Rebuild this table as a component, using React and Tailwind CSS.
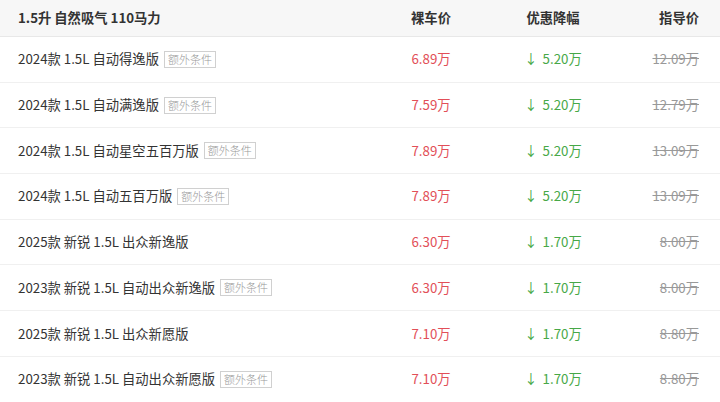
const ROWS = [
  { name: "2024款 1.5L 自动得逸版", extra: true, price: "6.89万", cut: "5.20万", guide: "12.09万" },
  { name: "2024款 1.5L 自动满逸版", extra: true, price: "7.59万", cut: "5.20万", guide: "12.79万" },
  { name: "2024款 1.5L 自动星空五百万版", extra: true, price: "7.89万", cut: "5.20万", guide: "13.09万" },
  { name: "2024款 1.5L 自动五百万版", extra: true, price: "7.89万", cut: "5.20万", guide: "13.09万" },
  { name: "2025款 新锐 1.5L 出众新逸版", extra: false, price: "6.30万", cut: "1.70万", guide: "8.00万" },
  { name: "2023款 新锐 1.5L 自动出众新逸版", extra: true, price: "6.30万", cut: "1.70万", guide: "8.00万" },
  { name: "2025款 新锐 1.5L 出众新愿版", extra: false, price: "7.10万", cut: "1.70万", guide: "8.80万" },
  { name: "2023款 新锐 1.5L 自动出众新愿版", extra: true, price: "7.10万", cut: "1.70万", guide: "8.80万" },
];

const FONT = { fontFamily: '"Noto Sans CJK SC", "Noto Sans", sans-serif' };

export default function App() {
  return (
    <div className="w-[720px] h-[402px] overflow-hidden bg-white text-[13.3px] text-[#333]" style={FONT}>
      <div className="flex h-[37px] items-center border-b border-[#e8e8e8] bg-[#f7f7f7] font-bold">
        <div className="flex-1 pl-[18px]">1.5升 自然吸气 110马力</div>
        <div className="w-[122px] text-center">裸车价</div>
        <div className="w-[122px] text-center">优惠降幅</div>
        <div className="w-[106px] pr-[21px] text-right">指导价</div>
      </div>

      {ROWS.map((row, i) => (
        <div className="flex h-[45.7px] items-center border-b border-[#f0f0f0]" key={i}>
          <div className="flex flex-1 items-center pl-[18px]">
            <span>{row.name}</span>
            {row.extra ? (
              <span className="ml-[5px] border border-[#d0d0d0] px-[3px] text-[11px] font-light leading-[15px] text-[#999]">
                额外条件
              </span>
            ) : null}
          </div>
          <div className="w-[122px] text-center text-[#e24f58]">{row.price}</div>
          <div className="w-[122px] text-center text-[#47a847]">
            <span className="mr-[5px]">↓</span>
            {row.cut}
          </div>
          <div className="w-[106px] pr-[21px] text-right text-[#999] line-through">{row.guide}</div>
        </div>
      ))}
    </div>
  );
}
